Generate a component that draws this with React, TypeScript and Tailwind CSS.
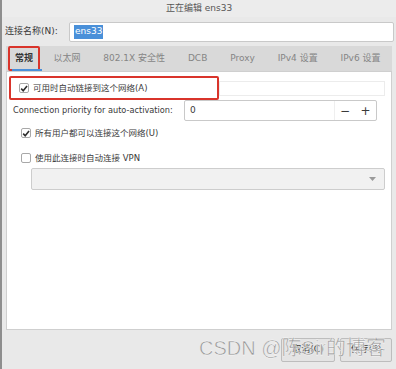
import React from "react";

const font = { fontFamily: '"DejaVu Sans", "Noto Sans CJK SC", sans-serif' };

function Check({ checked }: { checked?: boolean }) {
  return (
    <span className="flex h-[10px] w-[10px] items-center justify-center rounded-[2px] border border-[#a8a8a8] bg-white">
      {checked ? (
        <svg width="9" height="9" viewBox="0 0 10 10">
          <path d="M1.5 5.2 L4 7.8 L8.8 1.8" fill="none" stroke="#2e2e2e" strokeWidth="2" />
        </svg>
      ) : null}
    </span>
  );
}

const tabs = ["以太网", "802.1X 安全性", "DCB", "Proxy", "IPv4 设置", "IPv6 设置"];

export default function App() {
  return (
    <div
      className="relative flex h-[369px] w-[396px] flex-col overflow-hidden border-l-2 border-[#8e8e8e] bg-[#e9e9e9] text-[9px] text-[#3a3a3a]"
      style={font}
    >
      <div className="flex h-[17px] items-center justify-center bg-[#ececec] text-[#555]">正在编辑 ens33</div>

      <div className="flex items-center gap-[6px] pl-[3px] pr-[2px] pt-[5px]">
        <span className="w-[58px]">连接名称(N):</span>
        <div className="flex h-[20px] flex-1 items-center rounded-[2px] border border-[#c9c9c9] bg-white pl-[4px]">
          <span className="bg-[#4a90d9] px-px text-white">ens33</span>
        </div>
      </div>

      <div className="mx-[4px] mt-[4px] flex h-[25px] items-end bg-[#d9d9d9] pl-[2px]">
        <div className="relative flex h-[25px] w-[32px] items-center justify-center rounded-[2px] border-2 border-[#d9342b] font-bold text-[#333]">
          常规
          <span className="absolute bottom-[-2px] left-[2px] right-[-4px] h-[2px] bg-[#4a90d9]" />
        </div>
        <div className="flex h-[25px] flex-1 items-center justify-around pl-[2px] text-[#858585]">
          {tabs.map((t) => (
            <span key={t}>{t}</span>
          ))}
        </div>
      </div>

      <div className="mx-[4px] flex h-[259px] flex-col border border-[#cfcfcf] bg-white">
        <div className="mt-[4px] flex items-center">
          <div className="ml-[2px] flex h-[24px] w-[210px] items-center gap-[4px] rounded-[2px] border-2 border-[#d9342b] pl-[8px]">
            <Check checked />
            <span className="text-[8.5px]">可用时自动链接到这个网络(A)</span>
          </div>
          <div className="mr-[6px] h-[15px] flex-1 border border-[#ececec]" />
        </div>

        <div className="flex items-center pl-[6px] pr-[14px]">
          <span className="w-[171px] whitespace-nowrap text-[8.2px]">Connection priority for auto-activation:</span>
          <div className="flex h-[21px] flex-1 items-center rounded-[2px] border border-[#c9c9c9] bg-white">
            <span className="flex-1 pl-[5px]">0</span>
            <span className="flex h-full w-[21px] items-center justify-center border-l border-[#efefef] text-[12px]">−</span>
            <span className="flex h-full w-[21px] items-center justify-center text-[12px]">+</span>
          </div>
        </div>

        <div className="mt-[6px] flex items-center gap-[4px] pl-[14px]">
          <Check checked />
          <span className="text-[8.5px]">所有用户都可以连接这个网络(U)</span>
        </div>

        <div className="mt-[12px] flex items-center gap-[4px] pl-[14px]">
          <Check />
          <span className="text-[8.5px]">使用此连接时自动连接 VPN</span>
        </div>

        <div className="ml-[24px] mr-[6px] mt-[3px] flex h-[22px] items-center justify-end rounded-[2px] border border-[#cdcdcd] bg-[#f1f1f1] pr-[8px]">
          <svg width="7" height="4" viewBox="0 0 7 4">
            <path d="M0 0 L7 0 L3.5 4 Z" fill="#9a9a9a" />
          </svg>
        </div>
      </div>

      <div className="flex flex-1 items-center justify-end gap-[5px] pr-[4px]">
        <div className="flex h-[24px] w-[54px] items-center justify-center rounded-[2px] border border-[#bdbdbd] bg-[#e4e4e4] text-[#444]">
          取消(C)
        </div>
        <div className="flex h-[24px] w-[52px] items-center justify-center rounded-[2px] border border-[#bdbdbd] bg-[#e4e4e4] text-[#444]">
          保存(S)
        </div>
      </div>

      <div
        className="pointer-events-none absolute bottom-[6px] right-[10px] text-[20px] text-[#9a9a9a]"
        style={{ fontFamily: '"Liberation Sans", "Noto Sans CJK SC", sans-serif', WebkitTextStroke: "0.4px #ffffff" }}
      >
        CSDN @陈Sir的博客
      </div>
    </div>
  );
}
